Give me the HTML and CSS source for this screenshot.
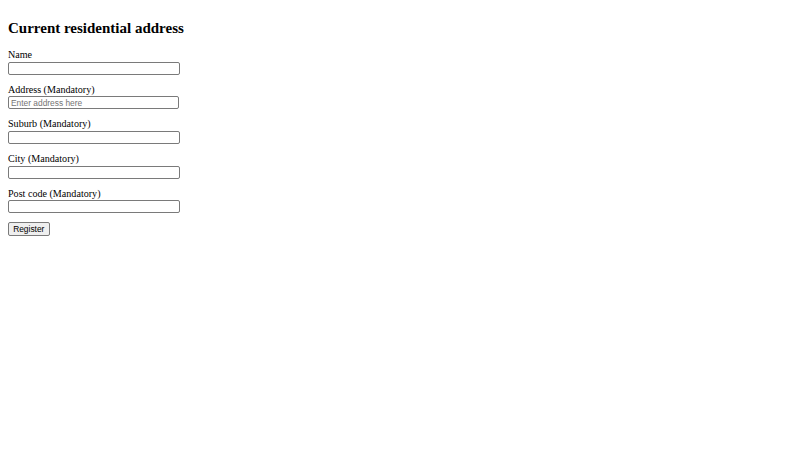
FILE: index.html
```html
<!DOCTYPE html>
<html lang="en">
<head>
    <meta charset="UTF-8">
    <meta name="viewport" content="width=device-width, initial-scale=1.0">
    <title>Current residential address</title>
    <link rel="stylesheet" href="styles.css">
</head>
<body>
    <h2 class="title">Current residential address</h2>
    <form class="address-form">
        <div class="field">
            <label for="name">Name</label>
            <input type="text" id="name">
        </div>
        <div class="field">
            <label for="address">Address (Mandatory)</label>
            <input type="text" id="address" class="narrow" placeholder="Enter address here">
        </div>
        <div class="field">
            <label for="suburb">Suburb (Mandatory)</label>
            <input type="text" id="suburb">
        </div>
        <div class="field">
            <label for="city">City (Mandatory)</label>
            <input type="text" id="city">
        </div>
        <div class="field">
            <label for="postcode">Post code (Mandatory)</label>
            <input type="text" id="postcode">
        </div>
        <button type="submit" class="register">Register</button>
    </form>
</body>
</html>
```

FILE: styles.css
```css
* {
    box-sizing: border-box;
}

body {
    margin: 0;
    padding: 8px;
    font-family: "Liberation Serif", serif;
    font-size: 10.1px;
    color: #000;
    background: #fff;
}

.title {
    margin: 11px 0 12px;
    font-size: 15px;
    line-height: 18px;
    font-weight: bold;
}

.address-form {
    display: flex;
    flex-direction: column;
    align-items: flex-start;
}

.field {
    display: flex;
    flex-direction: column;
    margin-bottom: 9.2px;
}

.field label {
    line-height: 12.5px;
}

.field input {
    width: 172px;
    height: 13px;
    margin: 0;
    padding: 0 2px;
    border: 1px solid #7a7a7a;
    border-radius: 2px;
    font-family: "Liberation Sans", sans-serif;
    font-size: 8.4px;
}

.field input.narrow {
    width: 171px;
}

.field input::placeholder {
    color: #757575;
}

.register {
    height: 13.5px;
    width: 41.5px;
    margin: 0;
    padding: 0;
    border: 1px solid #7a7a7a;
    border-radius: 2px;
    background: #efefef;
    font-family: "Liberation Sans", sans-serif;
    font-size: 8.4px;
    line-height: 11px;
    color: #000;
}
```
